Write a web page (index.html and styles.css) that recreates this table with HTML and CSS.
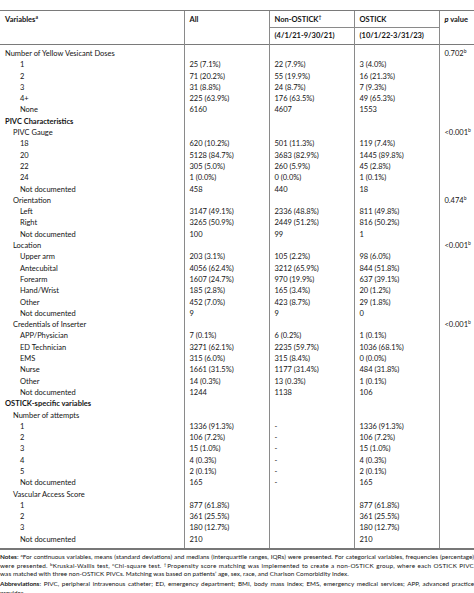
FILE: index.html
```html
<!DOCTYPE html>
<html>
<head>
<meta charset="utf-8">
<link rel="stylesheet" href="styles.css">
</head>
<body>
<div class="page">
<table class="tbl">
  <colgroup>
    <col class="c1"><col class="c2"><col class="c3"><col class="c4"><col class="c5">
  </colgroup>
  <thead>
    <tr class="h1">
      <th rowspan="2">Variables<sup>a</sup></th>
      <th rowspan="2">All</th>
      <th class="sub">Non-OSTICK<sup>†</sup></th>
      <th class="sub">OSTICK</th>
      <th rowspan="2"><i>p</i> value</th>
    </tr>
    <tr class="h2">
      <th>(4/1/21-9/30/21)</th>
      <th>(10/1/22-3/31/23)</th>
    </tr>
  </thead>
  <tbody>
    <tr class="first"><td class="l0">Number of Yellow Vesicant Doses</td><td></td><td></td><td></td><td>0.702<sup>b</sup></td></tr>
    <tr><td class="l2">1</td><td>25 (7.1%)</td><td>22 (7.9%)</td><td>3 (4.0%)</td><td></td></tr>
    <tr><td class="l2">2</td><td>71 (20.2%)</td><td>55 (19.9%)</td><td>16 (21.3%)</td><td></td></tr>
    <tr><td class="l2">3</td><td>31 (8.8%)</td><td>24 (8.7%)</td><td>7 (9.3%)</td><td></td></tr>
    <tr><td class="l2">4+</td><td>225 (63.9%)</td><td>176 (63.5%)</td><td>49 (65.3%)</td><td></td></tr>
    <tr><td class="l2">None</td><td>6160</td><td>4607</td><td>1553</td><td></td></tr>
    <tr><td class="l0 b">PIVC Characteristics</td><td></td><td></td><td></td><td></td></tr>
    <tr><td class="l1">PIVC Gauge</td><td></td><td></td><td></td><td>&lt;0.001<sup>b</sup></td></tr>
    <tr><td class="l2">18</td><td>620 (10.2%)</td><td>501 (11.3%)</td><td>119 (7.4%)</td><td></td></tr>
    <tr><td class="l2">20</td><td>5128 (84.7%)</td><td>3683 (82.9%)</td><td>1445 (89.8%)</td><td></td></tr>
    <tr><td class="l2">22</td><td>305 (5.0%)</td><td>260 (5.9%)</td><td>45 (2.8%)</td><td></td></tr>
    <tr><td class="l2">24</td><td>1 (0.0%)</td><td>0 (0.0%)</td><td>1 (0.1%)</td><td></td></tr>
    <tr><td class="l2">Not documented</td><td>458</td><td>440</td><td>18</td><td></td></tr>
    <tr><td class="l1">Orientation</td><td></td><td></td><td></td><td>0.474<sup>b</sup></td></tr>
    <tr><td class="l2">Left</td><td>3147 (49.1%)</td><td>2336 (48.8%)</td><td>811 (49.8%)</td><td></td></tr>
    <tr><td class="l2">Right</td><td>3265 (50.9%)</td><td>2449 (51.2%)</td><td>816 (50.2%)</td><td></td></tr>
    <tr><td class="l2">Not documented</td><td>100</td><td>99</td><td>1</td><td></td></tr>
    <tr><td class="l1">Location</td><td></td><td></td><td></td><td>&lt;0.001<sup>b</sup></td></tr>
    <tr><td class="l2">Upper arm</td><td>203 (3.1%)</td><td>105 (2.2%)</td><td>98 (6.0%)</td><td></td></tr>
    <tr><td class="l2">Antecubital</td><td>4056 (62.4%)</td><td>3212 (65.9%)</td><td>844 (51.8%)</td><td></td></tr>
    <tr><td class="l2">Forearm</td><td>1607 (24.7%)</td><td>970 (19.9%)</td><td>637 (39.1%)</td><td></td></tr>
    <tr><td class="l2">Hand/Wrist</td><td>185 (2.8%)</td><td>165 (3.4%)</td><td>20 (1.2%)</td><td></td></tr>
    <tr><td class="l2">Other</td><td>452 (7.0%)</td><td>423 (8.7%)</td><td>29 (1.8%)</td><td></td></tr>
    <tr><td class="l2">Not documented</td><td>9</td><td>9</td><td>0</td><td></td></tr>
    <tr><td class="l1">Credentials of Inserter</td><td></td><td></td><td></td><td>&lt;0.001<sup>b</sup></td></tr>
    <tr><td class="l2">APP/Physician</td><td>7 (0.1%)</td><td>6 (0.2%)</td><td>1 (0.1%)</td><td></td></tr>
    <tr><td class="l2">ED Technician</td><td>3271 (62.1%)</td><td>2235 (59.7%)</td><td>1036 (68.1%)</td><td></td></tr>
    <tr><td class="l2">EMS</td><td>315 (6.0%)</td><td>315 (8.4%)</td><td>0 (0.0%)</td><td></td></tr>
    <tr><td class="l2">Nurse</td><td>1661 (31.5%)</td><td>1177 (31.4%)</td><td>484 (31.8%)</td><td></td></tr>
    <tr><td class="l2">Other</td><td>14 (0.3%)</td><td>13 (0.3%)</td><td>1 (0.1%)</td><td></td></tr>
    <tr><td class="l2">Not documented</td><td>1244</td><td>1138</td><td>106</td><td></td></tr>
    <tr><td class="l0 b">OSTICK-specific variables</td><td></td><td></td><td></td><td></td></tr>
    <tr><td class="l1">Number of attempts</td><td></td><td></td><td></td><td></td></tr>
    <tr><td class="l2">1</td><td>1336 (91.3%)</td><td>-</td><td>1336 (91.3%)</td><td></td></tr>
    <tr><td class="l2">2</td><td>106 (7.2%)</td><td>-</td><td>106 (7.2%)</td><td></td></tr>
    <tr><td class="l2">3</td><td>15 (1.0%)</td><td>-</td><td>15 (1.0%)</td><td></td></tr>
    <tr><td class="l2">4</td><td>4 (0.3%)</td><td>-</td><td>4 (0.3%)</td><td></td></tr>
    <tr><td class="l2">5</td><td>2 (0.1%)</td><td>-</td><td>2 (0.1%)</td><td></td></tr>
    <tr><td class="l2">Not documented</td><td>165</td><td>-</td><td>165</td><td></td></tr>
    <tr><td class="l1">Vascular Access Score</td><td></td><td></td><td></td><td></td></tr>
    <tr><td class="l2">1</td><td>877 (61.8%)</td><td></td><td>877 (61.8%)</td><td></td></tr>
    <tr><td class="l2">2</td><td>361 (25.5%)</td><td></td><td>361 (25.5%)</td><td></td></tr>
    <tr><td class="l2">3</td><td>180 (12.7%)</td><td></td><td>180 (12.7%)</td><td></td></tr>
    <tr class="last"><td class="l2">Not documented</td><td>210</td><td></td><td>210</td><td></td></tr>
  </tbody>
</table>
<div class="notes">
  <p><b>Notes</b>: <sup>a</sup>For continuous variables, means (standard deviations) and medians (interquartile ranges, IQRs) were presented. For categorical variables, frequencies (percentage) <span class="wide">were presented. <sup>b</sup>Kruskal-Wallis test, <sup>c</sup>Chi-square test. <sup>†</sup>Propensity score matching was implemented to create a non-OSTICK group, where each OSTICK PIVC was</span> matched with three non-OSTICK PIVCs. Matching was based on patients’ age, sex, race, and Charlson Comorbidity Index.</p>
  <p><b>Abbreviations</b>: PIVC, peripheral intravenous catheter; ED, emergency department; BMI, body mass index; EMS, emergency medical services; APP, advanced practice provider.</p>
</div>
</div>
</body>
</html>
```

FILE: styles.css
```css
html, body {
  margin: 0;
  padding: 0;
  background: #fff;
}
body {
  font-family: "Lato", "Liberation Sans", sans-serif;
  color: #141414;
}
.page {
  width: 474px;
  padding-top: 10px;
}
.tbl {
  width: 474px;
  border-collapse: collapse;
  table-layout: fixed;
  font-size: 7.5px;
}
.c1 { width: 184px; }
.c2 { width: 85px; }
.c3 { width: 85px; }
.c4 { width: 85px; }
.c5 { width: 35px; }
.tbl th, .tbl td {
  padding: 0 0 0 5px;
  text-align: left;
  white-space: nowrap;
  overflow: hidden;
  border-left: 1px solid #8a8a8a;
}
.tbl th:first-child, .tbl td:first-child {
  border-left: none;
}
.tbl thead tr.h1 th {
  border-top: 1px solid #7a7a7a;
  vertical-align: top;
  height: 17px;
  padding-top: 4px;
  line-height: 9px;
  box-sizing: border-box;
}
.tbl thead th {
  font-weight: bold;
}
.tbl thead tr.h1 th.sub {
  border-bottom: 1px solid #8a8a8a;
}
.tbl thead tr.h2 th {
  height: 16px;
  line-height: 14px;
  vertical-align: middle;
}
.tbl thead tr.h2 th:first-child {
  border-left: 1px solid #8a8a8a;
}
.tbl thead {
  border-bottom: 1px solid #7a7a7a;
}
.tbl tbody td {
  line-height: 11.3px;
  height: 11.3px;
  vertical-align: middle;
}
.tbl tbody tr.first td {
  padding-top: 3px;
}
.tbl tbody tr.last td {
  padding-bottom: 3px;
  border-bottom: 2px solid #777;
}
.tbl sup {
  font-size: 5px;
  line-height: 1;
  vertical-align: 3px;
}
.l0 { padding-left: 5px !important; }
.l1 { padding-left: 13px !important; }
.l2 { padding-left: 20px !important; }
.b { font-weight: bold; }
.notes {
  font-size: 6.35px;
  line-height: 8.7px;
  text-align: justify;
  padding-top: 3px;
}
.notes .wide {
  letter-spacing: 0.16px;
}
.notes p {
  margin: 0 0 1px 0;
}
.notes sup {
  font-size: 4.5px;
  line-height: 1;
  vertical-align: 2.5px;
}
```
